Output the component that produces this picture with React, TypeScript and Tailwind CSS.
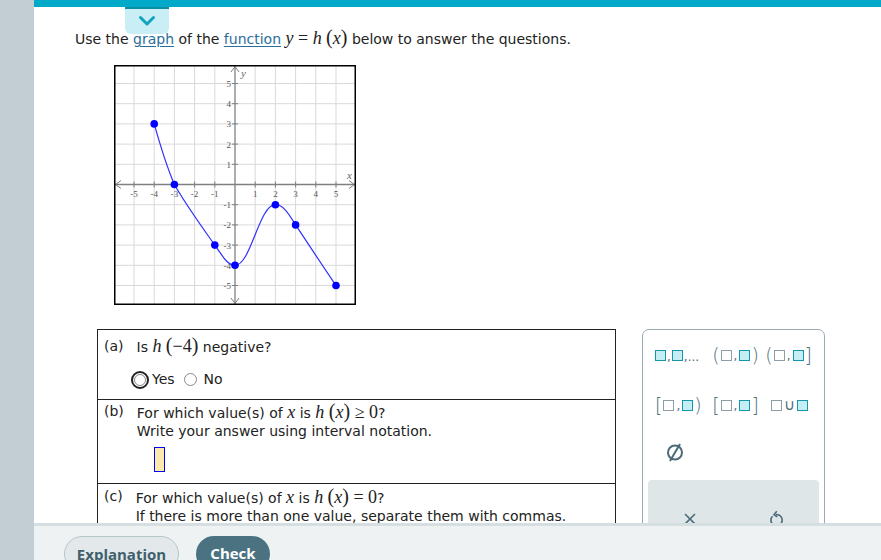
import React from "react";

const U = 20.2;
const OX = 121;
const OY = 119.5;
const X = (x: number) => OX + x * U;
const Y = (y: number) => OY - y * U;

const POINTS: [number, number][] = [
  [-4, 3],
  [-3, 0],
  [-1, -3],
  [0, -4],
  [2, -1],
  [3, -2],
  [5, -5],
];

function Graph() {
  const ticks = [-5, -4, -3, -2, -1, 1, 2, 3, 4, 5];
  const grid = [-6, -5, -4, -3, -2, -1, 1, 2, 3, 4, 5, 6];
  return (
    <svg width="242" height="240" viewBox="0 0 242 240" className="block">
      <rect x="0" y="0" width="242" height="240" fill="#fff" />
      {grid.map((g) => (
        <g key={g}>
          <line x1={X(g)} y1={0} x2={X(g)} y2={240} stroke="#d9d9d9" strokeWidth="1" />
          <line x1={0} y1={Y(g)} x2={242} y2={Y(g)} stroke="#d9d9d9" strokeWidth="1" />
        </g>
      ))}
      {/* axes */}
      <line x1={1} y1={OY} x2={241} y2={OY} stroke="#808080" strokeWidth="1.3" />
      <line x1={OX} y1={1} x2={OX} y2={239} stroke="#808080" strokeWidth="1.3" />
      <path d={`M7,${OY - 4} L1.5,${OY} L7,${OY + 4}`} fill="none" stroke="#808080" />
      <path d={`M235,${OY - 4} L240.5,${OY} L235,${OY + 4}`} fill="none" stroke="#808080" />
      <path d={`M${OX - 4},7 L${OX},1.5 L${OX + 4},7`} fill="none" stroke="#808080" />
      <path d={`M${OX - 4},233 L${OX},238.5 L${OX + 4},233`} fill="none" stroke="#808080" />
      {ticks.map((t) => (
        <g key={t}>
          <line x1={X(t)} y1={OY - 3} x2={X(t)} y2={OY + 3} stroke="#808080" />
          <line x1={OX - 3} y1={Y(t)} x2={OX + 3} y2={Y(t)} stroke="#808080" />
          <text
            x={X(t)}
            y={OY + 12}
            textAnchor="middle"
            fontSize="9"
            fill="#555"
            fontFamily="'Liberation Serif', serif"
          >
            {t}
          </text>
          <text
            x={OX - 4}
            y={Y(t) + 3.5}
            textAnchor="end"
            fontSize="9"
            fill="#555"
            fontFamily="'Liberation Serif', serif"
          >
            {t}
          </text>
        </g>
      ))}
      <text x={OX + 6} y={12} fontSize="11" fontStyle="italic" fill="#666" fontFamily="'Liberation Serif', serif">
        y
      </text>
      <text x={233} y={OY - 6} fontSize="11" fontStyle="italic" fill="#666" fontFamily="'Liberation Serif', serif">
        x
      </text>
      <path
        d={`M${X(-4)},${Y(3)} C45,76 52,100 ${X(-3)},${Y(0)} C72,140 88,162 ${X(-1)},${Y(-3)} C108,190 113,${Y(-4)} ${X(0)},${Y(-4)} C137,${Y(-4)} 145,${Y(-1)} ${X(2)},${Y(-1)} C170,${Y(-1)} 176,151 ${X(3)},${Y(-2)} C195,180 210,203 ${X(5)},${Y(-5)}`}
        fill="none"
        stroke="#3030ff"
        strokeWidth="1.2"
      />
      {POINTS.map(([px, py]) => (
        <circle key={`${px}${py}`} cx={X(px)} cy={Y(py)} r="3.8" fill="#0000ff" />
      ))}
      <rect x="0.75" y="0.75" width="240.5" height="238.5" fill="none" stroke="#000" strokeWidth="1.5" />
    </svg>
  );
}

function M({ children }: { children: React.ReactNode }) {
  return <span className="font-['Liberation_Serif',serif] italic text-[18px] leading-none">{children}</span>;
}

function P({ children }: { children: React.ReactNode }) {
  return <span className="font-['Liberation_Serif',serif] text-[20px] leading-none">{children}</span>;
}

function HOf({ arg }: { arg: React.ReactNode }) {
  return (
    <span className="whitespace-nowrap">
      <M>h</M> <P>(</P>
      {arg}
      <P>)</P>
    </span>
  );
}

function GrayBox() {
  return <span className="inline-block h-[11px] w-[11px] border-[1.5px] border-[#8d9ea5] bg-white" />;
}
function TealBox() {
  return <span className="inline-block h-[11px] w-[11px] border-[1.5px] border-[#1596ad] bg-[#c5edf4]" />;
}

function Paren({ c }: { c: string }) {
  return <span className="text-[19px] font-light leading-none text-[#4f6f7b]">{c}</span>;
}

function Interval({ l, r }: { l: string; r: string }) {
  return (
    <span className="flex items-center gap-[1px]">
      <Paren c={l} />
      <GrayBox />
      <span className="mx-[1px] self-end pb-[3px] text-[12px] leading-none text-[#4f6f7b]">,</span>
      <TealBox />
      <Paren c={r} />
    </span>
  );
}

function Palette() {
  return (
    <div className="flex h-[232px] w-[183px] flex-col rounded-[7px] border border-[#9aabb2] bg-white">
      <div className="grid grid-cols-3 gap-y-[28px] px-[12px] pt-[14px]">
        <span className="flex h-[22px] items-center gap-[1px]">
          <TealBox />
          <span className="self-end pb-[3px] text-[12px] leading-none text-[#4f6f7b]">,</span>
          <TealBox />
          <span className="self-end pb-[3px] text-[12px] leading-none text-[#4f6f7b]">,...</span>
        </span>
        <span className="flex h-[22px] items-center justify-center pl-[4px]">
          <Interval l="(" r=")" />
        </span>
        <span className="flex h-[22px] items-center justify-end">
          <Interval l="(" r="]" />
        </span>
        <span className="flex h-[22px] items-center">
          <Interval l="[" r=")" />
        </span>
        <span className="flex h-[22px] items-center justify-center pl-[4px]">
          <Interval l="[" r="]" />
        </span>
        <span className="flex h-[22px] items-center justify-end gap-[2px] pr-[4px]">
          <GrayBox />
          <span className="text-[15px] leading-none text-[#4f6f7b]">∪</span>
          <TealBox />
        </span>
      </div>
      <div className="mt-[26px] pl-[22px]">
        <svg width="20" height="20" viewBox="0 0 20 20">
          <circle cx="10" cy="10.5" r="7" fill="none" stroke="#4a6b77" strokeWidth="2" />
          <line x1="15" y1="2" x2="5" y2="19" stroke="#4a6b77" strokeWidth="2" />
        </svg>
      </div>
      <div className="mx-[5px] mt-[18px] flex flex-1 items-center justify-around rounded-t-[4px] bg-[#dfe6e8] pb-[2px]">
        <svg width="14" height="14" viewBox="0 0 14 14">
          <path d="M2,2 L12,12 M12,2 L2,12" stroke="#4a6b77" strokeWidth="1.6" />
        </svg>
        <svg width="16" height="18" viewBox="0 0 16 18">
          <path d="M4.5,6.2 A5.6,5.6 0 1 0 8,4.5" fill="none" stroke="#4a6b77" strokeWidth="1.6" />
          <path d="M8.8,1.2 L6,4.5 L9.2,6.8" fill="none" stroke="#4a6b77" strokeWidth="1.6" />
        </svg>
      </div>
    </div>
  );
}

export default function App() {
  return (
    <div className="flex h-[560px] w-[881px] overflow-hidden bg-white font-['DejaVu_Sans',sans-serif] text-[14px] text-[#222]">
      <div className="w-[34px] shrink-0 bg-[#c2ced3]" />
      <div className="flex min-w-0 flex-1 flex-col">
        <div className="h-[7px] shrink-0 bg-[#00a9c7]" />
        <div className="relative min-h-0 flex-1 overflow-hidden">
          {/* collapse tab */}
          <div className="absolute left-[91px] top-0 flex h-[27px] w-[44px] justify-center rounded-b-[6px] border-t-2 border-[#0a8ea6] bg-[#c9eef5] pt-[6px]">
            <svg width="18" height="12" viewBox="0 0 18 12">
              <path d="M2.5,2.5 L9,9 L15.5,2.5" fill="none" stroke="#11a3bf" strokeWidth="3" strokeLinecap="round" strokeLinejoin="round" />
            </svg>
          </div>

          <p className="pl-[41px] pt-[20px] leading-[20px]">
            Use the <span className="text-[#2a6f9a] underline underline-offset-2">graph</span> of the{" "}
            <span className="text-[#2a6f9a] underline underline-offset-2">function</span> <M>y</M>
            <span className="font-['Liberation_Serif',serif] text-[18px] leading-none"> = </span>
            <HOf arg={<M>x</M>} /> below to answer the questions.
          </p>

          <div className="ml-[80px] mt-[16px]">
            <Graph />
          </div>

          <div className="mt-[24px] flex items-start">
            <div className="ml-[63px] w-[519px] border border-[#222]">
              {/* (a) */}
              <div className="h-[70px] border-b border-[#222] pl-[6px] pt-[4px]">
                <div className="flex h-[24px] items-center gap-[13px]">
                  <span>(a)</span>
                  <span className="whitespace-nowrap">
                    Is <HOf arg={<span className="font-['Liberation_Serif',serif] text-[18px] leading-none">−4</span>} /> negative?
                  </span>
                </div>
                <div className="mt-[11px] flex items-center pl-[27px]">
                  <span className="flex h-[18px] w-[18px] items-center justify-center rounded-full border-2 border-[#222]">
                    <span className="h-[12px] w-[12px] rounded-full border border-[#8a8a8a] bg-white" />
                  </span>
                  <span className="ml-[3px]">Yes</span>
                  <span className="ml-[9px] h-[13px] w-[13px] rounded-full border border-[#8a8a8a]" />
                  <span className="ml-[7px]">No</span>
                </div>
              </div>
              {/* (b) */}
              <div className="h-[84px] border-b border-[#222] pl-[6px] pt-[1px]">
                <div className="flex gap-[13px]">
                  <span className="h-[20px] leading-[20px]">(b)</span>
                  <div>
                    <div className="h-[20px] whitespace-nowrap leading-[20px]">
                      For which value(s) of <M>x</M> is <HOf arg={<M>x</M>} />
                      <span className="font-['Liberation_Serif',serif] text-[18px] leading-none"> ≥ 0</span>?
                    </div>
                    <div className="h-[20px] leading-[20px]">Write your answer using interval notation.</div>
                  </div>
                </div>
                <div className="ml-[50px] mt-[6px] h-[25px] w-[11px] border border-[#0000ff] bg-[#fde9a9]" />
              </div>
              {/* (c) */}
              <div className="h-[60px] pl-[6px] pt-[2px]">
                <div className="flex gap-[13px]">
                  <span className="h-[20px] leading-[20px]">(c)</span>
                  <div>
                    <div className="h-[20px] whitespace-nowrap leading-[20px]">
                      For which value(s) of <M>x</M> is <HOf arg={<M>x</M>} />
                      <span className="font-['Liberation_Serif',serif] text-[18px] leading-none"> = 0</span>?
                    </div>
                    <div className="h-[20px] leading-[20px]">If there is more than one value, separate them with commas.</div>
                  </div>
                </div>
              </div>
            </div>
            <div className="ml-[26px]">
              <Palette />
            </div>
          </div>
        </div>
        <div className="h-[37px] shrink-0 border-t-[3px] border-[#d5dee1] bg-[#eef2f3] pl-[30px] pt-[10px]">
          <div className="flex gap-[17px] font-['Open_Sans',sans-serif] text-[15px] font-bold">
            <span className="flex h-[36px] w-[115px] items-start justify-center rounded-full border border-[#b6c5ca] bg-[#e3e9eb] pt-[6px] text-[#3f5f6b]">
              Explanation
            </span>
            <span className="flex h-[36px] w-[74px] items-start justify-center rounded-full bg-[#4a7281] pt-[6px] text-white">
              Check
            </span>
          </div>
        </div>
      </div>
    </div>
  );
}
